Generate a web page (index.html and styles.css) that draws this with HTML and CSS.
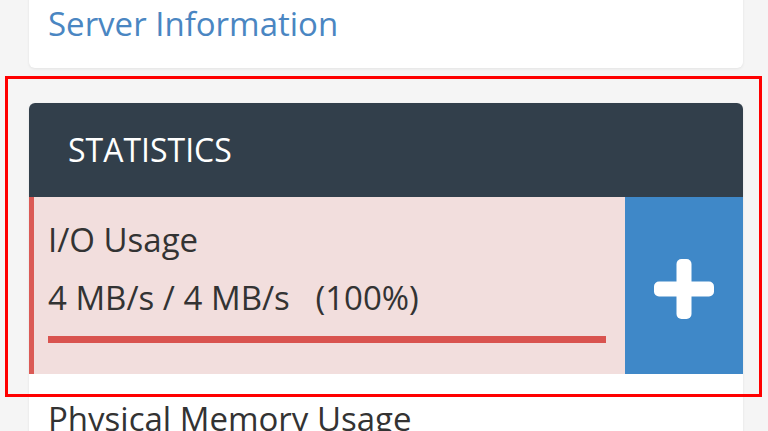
FILE: index.html
```html
<!DOCTYPE html>
<html>
<head>
<meta charset="utf-8">
<link rel="stylesheet" href="styles.css">
</head>
<body>
<div class="page">
  <div class="card top-card">
    <a class="card-link">Server Information</a>
  </div>
  <div class="panel">
    <div class="panel-heading">STATISTICS</div>
    <div class="stat-row alert">
      <div class="stat-body">
        <div class="stat-label">I/O Usage</div>
        <div class="stat-value">4 MB/s / 4 MB/s&nbsp;&nbsp;&nbsp;(100%)</div>
        <div class="progress"><div class="progress-bar" style="width:100%"></div></div>
      </div>
      <div class="stat-action">
        <svg class="plus" width="60" height="60" viewBox="0 0 60 60">
          <rect x="22.5" y="0" width="15" height="60" rx="5" fill="#fff"/>
          <rect x="0" y="22.5" width="60" height="15" rx="5" fill="#fff"/>
        </svg>
      </div>
    </div>
    <div class="stat-row plain">
      <div class="stat-body">
        <div class="stat-label">Physical Memory Usage</div>
      </div>
    </div>
  </div>
</div>
<div class="highlight"></div>
</body>
</html>
```
FILE: styles.css
```css
html, body {
  margin: 0;
  padding: 0;
}
body {
  background: #f5f5f5;
  font-family: "Open Sans", "Noto Sans", sans-serif;
  color: #333;
  width: 768px;
  height: 431px;
  overflow: hidden;
  position: relative;
}
.page {
  padding-left: 29px;
  width: 714px;
}
.card {
  background: #fff;
  border-radius: 6px;
  box-shadow: 0 1px 3px rgba(0, 0, 0, 0.08);
}
.top-card {
  margin-top: -20px;
  padding: 21px 0 22px 19px;
}
.card-link {
  display: block;
  font-size: 33px;
  line-height: 45px;
  color: #4a86c2;
}
.panel {
  margin-top: 35px;
  background: #fff;
  border-radius: 6px 6px 0 0;
  box-shadow: 0 1px 3px rgba(0, 0, 0, 0.08);
}
.panel-heading {
  background: #323f4b;
  color: #fff;
  height: 94px;
  line-height: 94px;
  font-size: 32px;
  padding-left: 39px;
  border-radius: 6px 6px 0 0;
}
.stat-row {
  display: flex;
}
.alert {
  background: #f2dedd;
  border-left: 5px solid #db5a55;
  height: 177px;
}
.stat-body {
  flex: 1;
  padding: 20px 19px 0 14px;
}
.stat-label, .stat-value {
  font-size: 33px;
  line-height: 45px;
  color: #333;
}
.stat-value {
  margin-top: 13px;
}
.progress {
  margin-top: 16px;
  height: 7px;
}
.progress-bar {
  height: 100%;
  background: #d9534f;
}
.stat-action {
  width: 118px;
  background: #3f88c8;
  display: flex;
  align-items: center;
  justify-content: center;
  padding-top: 7px;
  box-sizing: border-box;
}
.plain .stat-body {
  padding: 22px 19px 0 19px;
}
.plain {
  height: 80px;
}
.highlight {
  position: absolute;
  left: 5px;
  top: 76px;
  width: 751px;
  height: 315px;
  border: 3px solid #ff0000;
}
```
